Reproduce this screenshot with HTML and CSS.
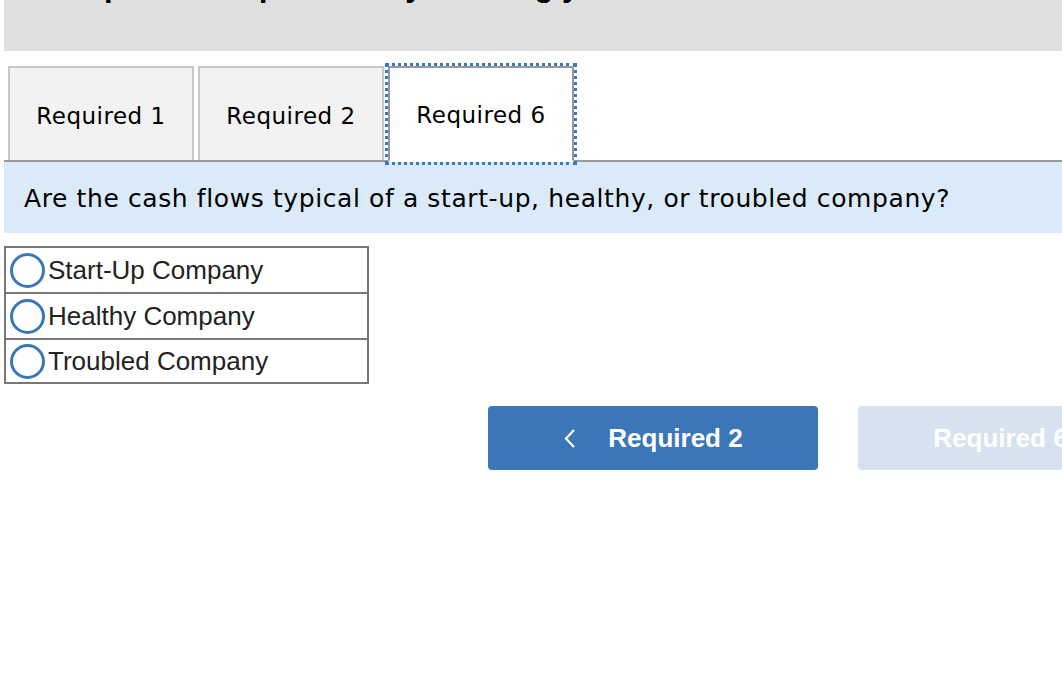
FILE: index.html
```html
<!DOCTYPE html>
<html>
<head>
	<title>Required 6</title>
	<meta name="viewport" content="width=device-width,initial-scale=1.0">
	<link rel="stylesheet" href="styles.css">
</head>
<body>
<div class="wrapper">
	<div class="top_bar">
		<h2 class="intro">Complete this question by entering your answers in the tabs below.</h2>
	</div>

	<div class="tabs">
		<div class="tab">Required 1</div>
		<div class="tab">Required 2</div>
		<div class="tab active">Required 6</div>
	</div>

	<div class="question">
		<p>Are the cash flows typical of a start-up, healthy, or troubled company?</p>
	</div>

	<ul class="option_grp">
		<li class="option"><span class="radio"></span>Start-Up Company</li>
		<li class="option"><span class="radio"></span>Healthy Company</li>
		<li class="option"><span class="radio"></span>Troubled Company</li>
	</ul>

	<div class="nav">
		<button class="nav_btn">
			<svg width="13" height="19" viewBox="0 0 13 19"><polyline points="11,1 3,9.5 11,18" fill="none" stroke="#fff" stroke-width="2.2"/></svg>
			<span>Required 2</span>
		</button>
		<button class="nav_btn disabled">
			<span>Required 6</span>
			<svg width="13" height="19" viewBox="0 0 13 19"><polyline points="2,1 10,9.5 2,18" fill="none" stroke="#fff" stroke-width="2.2"/></svg>
		</button>
	</div>
</div>
</body>
</html>
```

FILE: styles.css
```css
*{margin: 0;padding: 0;box-sizing: border-box;}
html,body{overflow: hidden;background: #fff;}
body{font-family: "DejaVu Sans", Verdana, sans-serif;color: #000;}
.wrapper{padding-left: 4px;width: 1062px;height: 674px;overflow: hidden;}

.top_bar{height: 51px;background: #dfdfdf;overflow: hidden;}
.intro{font-family: "Liberation Sans", Arial, sans-serif;font-size: 31px;line-height: 31px;font-weight: bold;margin-top: -30px;padding-left: 31px;white-space: nowrap;}

.tabs{display: flex;gap: 4px;margin-top: 15px;padding-left: 4px;border-bottom: 2px solid #999;}
.tab{width: 186px;height: 94px;background: #f2f2f2;border: 2px solid #c8c8c8;border-bottom: none;display: flex;justify-content: center;align-items: center;font-size: 23px;letter-spacing: 0.5px;padding-top: 4px;}
.tab.active{background: #fff;border-color: #999;outline: 3px dotted #3b78c0;outline-offset: 0;position: relative;z-index: 1;height: 96px;margin-bottom: -2px;border-bottom: 2px solid #fff;padding-top: 2px;}

.question{background: #dbeaf9;height: 71px;padding-left: 20px;display: flex;align-items: center;}
.question p{font-size: 25px;letter-spacing: 0.6px;padding-top: 2px;}

.option_grp{list-style: none;width: 365px;margin-top: 13px;border: 2px solid #777;}
.option{height: 46px;display: flex;align-items: center;font-family: "Liberation Sans", Arial, sans-serif;font-size: 26px;color: #222;border-top: 2px solid #777;}
.option:first-child{border-top: none;height: 44px;}
.option:last-child{height: 44px;}
.radio{width: 35px;height: 35px;border: 3px solid #3a77b9;border-radius: 50%;margin: 0 3px 0 4px;flex-shrink: 0;}

.nav{display: flex;gap: 40px;margin-top: 22px;padding-left: 484px;}
.nav_btn{width: 330px;height: 64px;flex-shrink: 0;border: none;outline: none;border-radius: 4px;background: #3b76b8;color: #fff;display: flex;justify-content: center;align-items: center;gap: 32px;font-family: "Liberation Sans", Arial, sans-serif;font-size: 26px;font-weight: bold;cursor: pointer;}
.nav_btn.disabled{background: #d6e2f0;cursor: default;}
```
